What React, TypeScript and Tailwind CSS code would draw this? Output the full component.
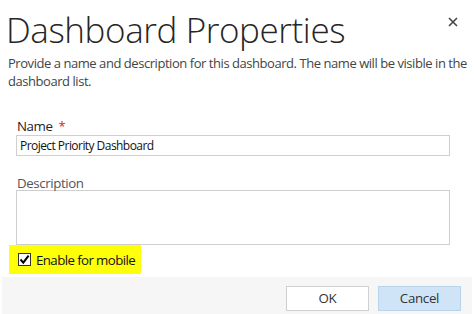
export default function App() {
  return (
    <div className="relative flex h-[314px] w-[474px] flex-col overflow-hidden bg-white font-['Open_Sans',sans-serif] text-[#333]">
      <div className="flex items-start justify-between pl-[6px] pr-[16px] pt-[7px]">
        <h1 className="text-[35px] font-light leading-[46px] tracking-[-0.4px] text-[#262626]">Dashboard Properties</h1>
        <button className="mt-[10px] text-[#444]" aria-label="Close">
          <svg width="10" height="10" viewBox="0 0 10 10">
            <path d="M1 1L9 9M9 1L1 9" stroke="#444" strokeWidth="1.6" />
          </svg>
        </button>
      </div>
      <p className="mt-[1px] pl-[8px] pr-[4px] text-[13px] leading-[18px] tracking-[-0.45px] text-[#444]">
        Provide a name and description for this dashboard. The name will be visible in the dashboard list.
      </p>
      <div className="mt-[28px] px-[16px] pr-[24px]">
        <label className="flex items-center gap-[6px] pl-[1px] text-[13.3px] leading-[16px] tracking-[-0.4px] text-[#222]">
          Name <span className="text-[13px] text-[#e02020]">*</span>
        </label>
        <div className="mt-[1px] h-[21px] border border-[#cfcfcf] pl-[3px] text-[12px] leading-[19px] tracking-[-0.55px] text-[#111]">
          Project Priority Dashboard
        </div>
        <div className="mt-[20px] pl-[1px] text-[13.3px] leading-[14px] tracking-[-0.4px] text-[#555]">Description</div>
        <div className="h-[55px] border border-[#cfcfcf]" />
      </div>
      <div className="ml-[9px] flex h-[29px] w-[132px] items-center gap-[5px] bg-[#ffff0a] pl-[9px]">
        <span className="flex h-[13px] w-[13px] shrink-0 items-center justify-center border border-[#333] bg-white">
          <svg width="11" height="11" viewBox="0 0 11 11">
            <path d="M1.5 5.5L4.3 8.6L9.6 1.6" fill="none" stroke="#000" strokeWidth="2" />
          </svg>
        </span>
        <span className="whitespace-nowrap text-[13.3px] leading-[16px] tracking-[-0.6px] text-[#111]">Enable for mobile</span>
      </div>
      <div className="mx-[2px] mt-[3px] flex flex-1 items-start justify-end gap-[9px] bg-[#f6f6f6] pr-[11px] pt-[9px]">
        <button className="h-[25px] w-[83px] border border-[#d0d0d0] bg-white text-[13.3px] tracking-[-0.3px] text-[#333]">OK</button>
        <button className="h-[25px] w-[83px] border border-[#b9d3ea] bg-[#cfe5f7] text-[13.3px] tracking-[-0.3px] text-[#333]">Cancel</button>
      </div>
    </div>
  );
}
